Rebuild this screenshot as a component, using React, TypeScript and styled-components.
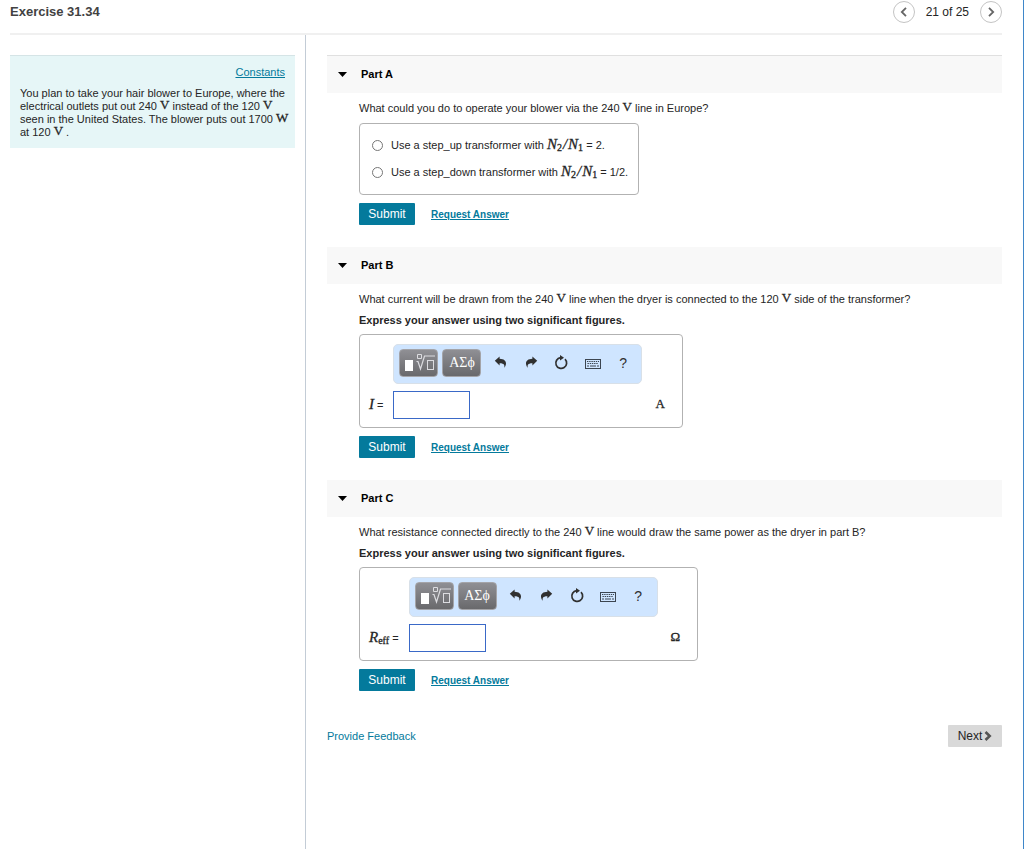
import React from "react";
import styled, { createGlobalStyle } from "styled-components";

const GlobalStyle = createGlobalStyle`
  *, *::before, *::after { box-sizing: border-box; }
  body {
    margin: 0;
    background: #fff;
    color: #252525;
    font: 11px/13px "Liberation Sans", Arial, sans-serif;
  }
  button, input { font-family: inherit; margin: 0; }
`;

const Page = styled.div`
  display: flex;
  flex-direction: column;
  min-height: 100vh;
  padding: 0 21px 0 10px;
  border-right: 1px solid #3f87c9;
`;

const Header = styled.header`
  display: flex;
  justify-content: space-between;
  align-items: flex-start;
  height: 35px;
  border-bottom: 2px solid #f0f0f0;
`;

const ExerciseTitle = styled.h1`
  margin: 4px 0 0;
  font-size: 13px;
  line-height: 16px;
  color: #424242;
`;

const Pager = styled.nav`
  display: flex;
  align-items: center;
  gap: 11px;
  font-size: 12px;
  line-height: 24px;
`;

const PagerButton = styled.button`
  display: grid;
  place-items: center;
  width: 22px;
  height: 22px;
  padding: 0;
  border: 1px solid #c4c4c4;
  border-radius: 50%;
  background: #fff;
`;

const Columns = styled.div`
  display: flex;
  flex: 1;
`;

const Aside = styled.aside`
  flex: 0 0 296px;
  padding: 20px 10px 0 0;
  border-right: 1px solid #c3ccd6;
`;

const ProblemBox = styled.section`
  padding: 10px 2px 9px 10px;
  border-top: 1px solid #d5e4e6;
  background: #e6f6f7;
`;

const ConstantsRow = styled.div`
  display: flex;
  justify-content: flex-end;
  margin: 0 8px 8px 0;
`;

const TextLink = styled.a<{ $bold?: boolean }>`
  color: #047a9c;
  font-size: ${(p) => (p.$bold ? "10px" : "11px")};
  font-weight: ${(p) => (p.$bold ? 700 : 400)};
  text-underline-offset: 1px;
`;

const ProblemText = styled.p`
  margin: 0;
`;

const Main = styled.main`
  flex: 1;
  min-width: 0;
  padding: 20px 0 0 21px;
`;

const PartSection = styled.section`
  margin-bottom: 22px;
`;

const PartHeader = styled.h2<{ $first?: boolean }>`
  display: flex;
  align-items: center;
  gap: 14px;
  height: ${(p) => (p.$first ? "38px" : "37px")};
  margin: 0;
  padding-left: 11px;
  border-top: ${(p) => (p.$first ? "1px solid #e0e0e0" : "0")};
  background: #f8f8f8;
  font-size: 11px;
  color: #000;
`;

const PartBody = styled.div`
  padding: 9px 0 0 32px;
`;

const Question = styled.p`
  margin: 0 0 8px;
`;

const Instruction = styled.p`
  margin: 0 0 7px;
  font-weight: 700;
`;

const Roman = styled.span`
  font: 13px/10px "Liberation Serif", "Times New Roman", serif;
  vertical-align: 1px;
  -webkit-text-stroke: 0.3px currentColor;
`;

const Italic = styled.i`
  font: italic 15px/12px "Liberation Serif", "Times New Roman", serif;
  -webkit-text-stroke: 0.3px currentColor;
`;

const Slash = styled(Italic)`
  padding: 0 1px;
`;

const Sub = styled.sub`
  font: 10px/1 "Liberation Serif", "Times New Roman", serif;
  vertical-align: -2px;
  -webkit-text-stroke: 0.3px currentColor;
`;

const ChoiceBox = styled.fieldset`
  display: inline-flex;
  flex-direction: column;
  gap: 11px;
  width: 280px;
  height: 72px;
  margin: 0;
  padding: 13px 8px 13px 12px;
  border: 1px solid #b2b2b2;
  border-radius: 4px;
`;

const Choice = styled.label`
  display: flex;
  align-items: center;
  gap: 8px;
  height: 16px;
  white-space: nowrap;
`;

const Radio = styled.input`
  appearance: none;
  width: 11px;
  height: 11px;
  border: 1px solid #767676;
  border-radius: 50%;
  background: #fff;
  &:checked { border-width: 4px; }
`;

const AnswerBox = styled.div`
  display: inline-grid;
  grid-template-columns: auto 249px auto;
  row-gap: 7px;
  align-items: center;
  padding: 9px 17px 8px 9px;
  border: 1px solid #b2b2b2;
  border-radius: 4px;
`;

const AnswerLabel = styled.label`
  grid-column: 1;
  padding-right: 10px;
  white-space: nowrap;
`;

const Unit = styled.span`
  padding-left: 13px;
  line-height: 12px;
`;

const AnswerInput = styled.input`
  justify-self: start;
  width: 77px;
  height: 28px;
  padding: 0 4px;
  border: 1px solid #3a69c7;
  background: #fff;
  font-size: 12px;
`;

const Toolbar = styled.div`
  grid-column: 2;
  display: flex;
  gap: 4px;
  height: 40px;
  padding: 4px 3px 0 5px;
  border: 1px solid #d8e0e8;
  border-radius: 5px;
  background: #cfe5ff;
`;

const TemplateButton = styled.button`
  display: grid;
  place-items: center;
  width: 39px;
  height: 28px;
  padding: 0;
  border: 1px solid #a4a4a8;
  border-radius: 4px;
  background: linear-gradient(#8f8f94, #69696c);
  color: #fff;
  font: 14px/20px "Liberation Serif", "Times New Roman", serif;
`;

const ToolGroup = styled.div`
  display: flex;
  flex: 1;
`;

const ToolButton = styled.button`
  display: grid;
  flex: 1;
  place-items: center;
  height: 27px;
  padding: 0;
  border: 0;
  background: none;
  color: #303030;
  font-size: 14px;
`;

const Actions = styled.div`
  display: flex;
  align-items: center;
  gap: 16px;
  margin-top: 8px;
`;

const SubmitButton = styled.button`
  width: 56px;
  height: 22px;
  padding: 0;
  border: 0;
  border-radius: 1px;
  background: #047a9c;
  color: #fff;
  font-size: 12px;
`;

const Footer = styled.footer`
  display: flex;
  align-items: center;
  justify-content: space-between;
  padding-top: 12px;
`;

const FeedbackLink = styled.a`
  color: #047a9c;
  font-size: 11px;
  text-decoration: none;
`;

const NextButton = styled.button`
  display: flex;
  align-items: center;
  justify-content: center;
  gap: 2px;
  width: 54px;
  height: 22px;
  padding: 0;
  border: 0;
  border-radius: 1px;
  background: #d9d9d9;
  color: #252525;
  font-size: 12px;
`;

const Volt = () => <Roman>V</Roman>;

const Ratio = () => (
  <>
    <Italic>N</Italic><Sub>2</Sub><Slash>/</Slash><Italic>N</Italic><Sub>1</Sub>
  </>
);

const Chevron = ({ left }: { left?: boolean }) => (
  <svg width="8" height="10" viewBox="0 0 8 10" fill="none" stroke="#666" strokeWidth="1.8" aria-hidden>
    <path d={left ? "M6 .8 1.800 5 6 9.200" : "M2 .8 6.200 5 2 9.200"} />
  </svg>
);

const TemplateIcon = () => (
  <svg width="33" height="20" viewBox="0 0 33 20" fill="none" stroke="#dcdce0" aria-hidden>
    <rect x="3" y="7" width="8" height="11" fill="#fff" stroke="none" />
    <path d="M15.500 1.500h4v4h-4z" />
    <path d="M14.500 8.500h1.500l2.500 7.500 4-13H33" strokeWidth="1.200" />
    <rect x="25.500" y="7.500" width="6" height="9" />
  </svg>
);

const TurnIcon = ({ flip }: { flip?: boolean }) => (
  <svg width="13" height="13" viewBox="0 0 13 13" fill="#303030" aria-hidden>
    <path
      transform={flip ? "matrix(-1 0 0 1 13 0)" : undefined}
      d="M0.800 4.800 5.600 0.500v2.300c4.200.1 6.600 2.100 6.400 5-.1 1.500-.8 3-1.900 4 .5-1.300.4-2.100-.1-3-.6-1-1.900-1.500-4.400-1.500v2.300z"
    />
  </svg>
);

const ResetIcon = () => (
  <svg width="15" height="15" viewBox="0 0 15 15" fill="none" aria-hidden>
    <path d="M11 4.200A5.400 5.400 0 1 1 6.500 2.700" stroke="#303030" strokeWidth="1.700" />
    <path d="M6 0 10 2.700 6 5.400z" fill="#303030" />
  </svg>
);

const KeyboardIcon = () => (
  <svg width="16" height="12" viewBox="0 -2 16 12" fill="none" stroke="#3c4550" aria-hidden>
    <rect x="0.500" y="0.500" width="15" height="9" />
    <path d="M2 2.500h12M2.500 4.500h11" strokeDasharray="1.400 0.800" />
    <path d="M2 7h2M5 7h6M12 7h2" />
  </svg>
);

function Part({ name, first, children }: { name: string; first?: boolean; children: React.ReactNode }) {
  return (
    <PartSection>
      <PartHeader $first={first}>
        <svg width="9" height="5" viewBox="0 0 9 5" aria-hidden><path d="M0 0h9L4.500 5z" /></svg>
        <span>{name}</span>
      </PartHeader>
      <PartBody>
        {children}
        <Actions>
          <SubmitButton type="button">Submit</SubmitButton>
          <TextLink href="#request" $bold>Request Answer</TextLink>
        </Actions>
      </PartBody>
    </PartSection>
  );
}

function Answer({ id, label, unit }: { id: string; label: React.ReactNode; unit: string }) {
  return (
    <AnswerBox>
      <Toolbar role="toolbar" aria-label="Math input">
        <TemplateButton type="button" aria-label="Templates"><TemplateIcon /></TemplateButton>
        <TemplateButton type="button">ΑΣϕ</TemplateButton>
        <ToolGroup>
          <ToolButton type="button" aria-label="Undo"><TurnIcon /></ToolButton>
          <ToolButton type="button" aria-label="Redo"><TurnIcon flip /></ToolButton>
          <ToolButton type="button" aria-label="Reset"><ResetIcon /></ToolButton>
          <ToolButton type="button" aria-label="Keyboard shortcuts"><KeyboardIcon /></ToolButton>
          <ToolButton type="button">?</ToolButton>
        </ToolGroup>
      </Toolbar>
      <AnswerLabel htmlFor={id}>{label} =</AnswerLabel>
      <AnswerInput id={id} type="text" />
      <Unit><Roman>{unit}</Roman></Unit>
    </AnswerBox>
  );
}

export default function App() {
  return (
    <>
      <GlobalStyle />
      <Page>
        <Header>
          <ExerciseTitle>Exercise 31.34</ExerciseTitle>
          <Pager aria-label="Exercises">
            <PagerButton type="button" aria-label="Previous"><Chevron left /></PagerButton>
            <span>21 of 25</span>
            <PagerButton type="button" aria-label="Next item"><Chevron /></PagerButton>
          </Pager>
        </Header>
        <Columns>
          <Aside>
            <ProblemBox>
              <ConstantsRow><TextLink href="#constants">Constants</TextLink></ConstantsRow>
              <ProblemText>
                You plan to take your hair blower to Europe, where the electrical outlets put out 240 <Volt /> instead
                of the 120 <Volt /> seen in the United States. The blower puts out 1700 <Roman>W</Roman> at
                120 <Volt /> .
              </ProblemText>
            </ProblemBox>
          </Aside>
          <Main>
            <Part name="Part A" first>
              <Question>What could you do to operate your blower via the 240 <Volt /> line in Europe?</Question>
              <ChoiceBox aria-label="Part A choices">
                <Choice>
                  <Radio type="radio" name="part-a" />
                  <span>Use a step_up transformer with <Ratio /> = 2.</span>
                </Choice>
                <Choice>
                  <Radio type="radio" name="part-a" />
                  <span>Use a step_down transformer with <Ratio /> = 1/2.</span>
                </Choice>
              </ChoiceBox>
            </Part>
            <Part name="Part B">
              <Question>
                What current will be drawn from the 240 <Volt /> line when the dryer is connected to the
                120 <Volt /> side of the transformer?
              </Question>
              <Instruction>Express your answer using two significant figures.</Instruction>
              <Answer id="current" label={<Italic>I</Italic>} unit="A" />
            </Part>
            <Part name="Part C">
              <Question>
                What resistance connected directly to the 240 <Volt /> line would draw the same power as the dryer in
                part B?
              </Question>
              <Instruction>Express your answer using two significant figures.</Instruction>
              <Answer id="resistance" label={<><Italic>R</Italic><Sub>eff</Sub></>} unit="Ω" />
            </Part>
            <Footer>
              <FeedbackLink href="#feedback">Provide Feedback</FeedbackLink>
              <NextButton type="button">
                Next
                <svg width="8" height="10" viewBox="0 0 8 10" fill="none" stroke="#555" strokeWidth="2.600" aria-hidden>
                  <path d="M1.500 1 5.700 5 1.500 9" />
                </svg>
              </NextButton>
            </Footer>
          </Main>
        </Columns>
      </Page>
    </>
  );
}
